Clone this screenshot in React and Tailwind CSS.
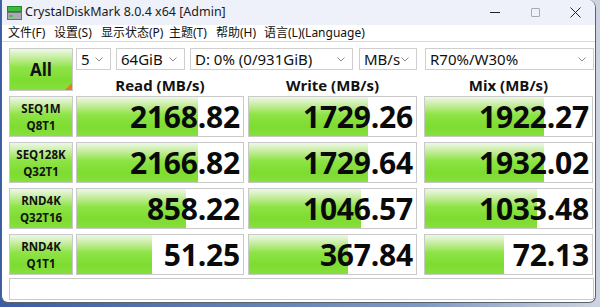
import React from 'react';

const rows = [
  { l1: 'SEQ1M', l2: 'Q8T1', vals: [['2168.82', 121], ['1729.26', 119], ['1922.27', 119]] },
  { l1: 'SEQ128K', l2: 'Q32T1', vals: [['2166.82', 121], ['1729.64', 119], ['1932.02', 119]] },
  { l1: 'RND4K', l2: 'Q32T16', vals: [['858.22', 109], ['1046.57', 112], ['1033.48', 112]] },
  { l1: 'RND4K', l2: 'Q1T1', vals: [['51.25', 75], ['367.84', 99], ['72.13', 79]] },
];

const menu = [
  ['文件(F)', 'w-[46px]'],
  ['设置(S)', 'w-[47px]'],
  ['显示状态(P)', 'w-[68px]'],
  ['主题(T)', 'w-[47px]'],
  ['帮助(H)', 'w-[48px]'],
  ['语言(L)(Language)', 'w-[100px]'],
];

const green = 'bg-[linear-gradient(to_bottom,#eef8e8_0%,#c4ec9c_22%,#8ee446_45%,#7edc30_75%,#86e03c_100%)]';
const font = "font-['Noto_Sans','Noto_Sans_CJK_SC',sans-serif]";

const Chevron = () => (
  <svg width="8" height="5" viewBox="0 0 8 5" className="shrink-0">
    <polyline points="0.5,0.5 4,4 7.5,0.5" fill="none" stroke="#8a8a8a" strokeWidth="1" />
  </svg>
);

const Select = ({ w, ml, children }) => (
  <div className={`${w} ${ml} h-[22px] border border-[#cfcfcf] bg-white flex items-center justify-between pl-[4px] pr-[7px] text-[15px] leading-none text-[#111]`}>
    <span>{children}</span>
    <Chevron />
  </div>
);

const ValueBox = ({ text, bar, w, ml }) => (
  <div className={`${w} ${ml} h-[41px] border border-[#c9c9c9] bg-white relative`}>
    <div className={`absolute left-0 top-0 bottom-0 ${green}`} style={{ width: bar }} />
    <div className="relative h-full flex items-center justify-end pr-[3px] font-['Open_Sans',sans-serif] font-bold text-[30px] leading-none text-[#0a0a0a] tracking-[-0.2px]">
      {text}
    </div>
  </div>
);

export default function App() {
  const widths = ['w-[168px] ml-[3px]', 'w-[169px] ml-[4px]', 'w-[169px] ml-[7px]'];
  return (
    <div className={`w-[600px] h-[307px] overflow-hidden bg-[linear-gradient(to_right,#3b5ea3,#7f98c4_70%,#cdd4df)] ${font}`}>
      <div className="ml-[1px] w-[595px] h-[303px] bg-white border-l border-r border-b border-[#5a6270] rounded-tr-[8px] rounded-b-[7px] overflow-hidden flex flex-col">
        {/* title bar */}
        <div className="h-[25px] bg-[#eef1f9] flex items-center shrink-0">
          <svg width="15" height="14" viewBox="0 0 15 14" className="ml-[5px] mr-[3px]">
            <rect x="0.5" y="0.5" width="14" height="5" fill="#3cba3c" stroke="#228a22" />
            <rect x="0.5" y="6.5" width="14" height="7" fill="#a8acb0" stroke="#6c7074" />
            <rect x="2" y="9" width="4" height="2" fill="#46c046" />
          </svg>
          <span className="text-[12.5px] text-[#1a1a1a]">CrystalDiskMark 8.0.4 x64 [Admin]</span>
          <div className="ml-auto flex items-center h-full">
            <div className="w-[40px] flex justify-center"><div className="w-[10px] h-px bg-[#222]" /></div>
            <div className="w-[40px] flex justify-center"><div className="w-[9px] h-[9px] border border-[#aaa] rounded-[1px]" /></div>
            <div className="w-[40px] flex justify-center">
              <svg width="11" height="11" viewBox="0 0 11 11"><path d="M0.5 0.5L10.5 10.5M10.5 0.5L0.5 10.5" stroke="#222" strokeWidth="1" /></svg>
            </div>
          </div>
        </div>
        {/* menu bar */}
        <div className="h-[17px] flex items-center text-[12px] text-[#111] border-b border-[#dadada] shrink-0 pl-[6px]">
          {menu.map(([t, w]) => (
            <span key={t} className={`${w} shrink-0 whitespace-nowrap`}>{t}</span>
          ))}
        </div>
        {/* main */}
        <div className="pl-[7px] pt-[6px] flex flex-col">
          <div className="flex">
            <div className={`w-[64px] h-[43px] border border-[#c9c9c9] ${green} relative flex items-center justify-center font-['Open_Sans',sans-serif] font-bold text-[17px] text-[#111]`}>
              All
              <div className="absolute right-0 bottom-0 w-0 h-0 border-l-[7px] border-l-transparent border-b-[7px] border-b-[#f07818]" />
            </div>
            <div className="flex flex-col">
              <div className="flex">
                <Select w="w-[35px]" ml="ml-[3px]">5</Select>
                <Select w="w-[69px]" ml="ml-[5px]">64GiB</Select>
                <Select w="w-[163px]" ml="ml-[5px]">D: 0% (0/931GiB)</Select>
                <Select w="w-[58px]" ml="ml-[6px]">MB/s</Select>
                <Select w="w-[169px]" ml="ml-[8px]">R70%/W30%</Select>
              </div>
              <div className="flex mt-[6px] font-['Open_Sans',sans-serif] font-bold text-[15px] leading-[18px] text-[#111]">
                <div className="w-[168px] ml-[3px] text-center">Read (MB/s)</div>
                <div className="w-[169px] ml-[4px] text-center">Write (MB/s)</div>
                <div className="w-[169px] ml-[7px] text-center">Mix (MB/s)</div>
              </div>
            </div>
          </div>
          <div className="flex flex-col gap-[5px] mt-[2px]">
            {rows.map((r, i) => (
              <div key={i} className="flex">
                <div className={`w-[64px] h-[41px] border border-[#c9c9c9] ${green} flex flex-col items-center justify-center font-['Open_Sans',sans-serif] font-bold text-[11.5px] leading-[17px] text-[#111]`}>
                  <span>{r.l1}</span>
                  <span>{r.l2}</span>
                </div>
                {r.vals.map(([t, b], j) => {
                  const [w, ml] = widths[j].split(' ');
                  return <ValueBox key={j} text={t} bar={b} w={w} ml={ml} />;
                })}
              </div>
            ))}
          </div>
          <div className="mt-[3px] w-[585px] h-[22px] border border-[#c9c9c9] bg-white" />
        </div>
      </div>
    </div>
  );
}
